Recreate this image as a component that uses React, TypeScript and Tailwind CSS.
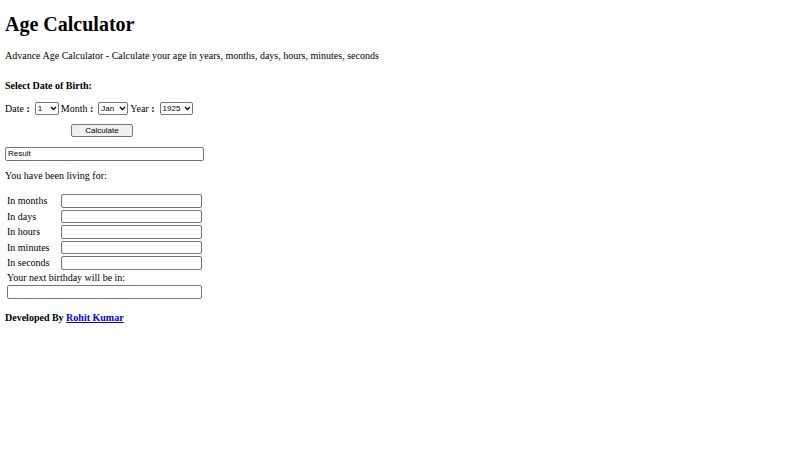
export default function App() {
  const rows = ["In months", "In days", "In hours", "In minutes", "In seconds"];
  return (
    <div className="min-h-[450px] bg-white p-[5px] font-['Liberation_Serif',serif] text-[10px] text-black">
      <h1 className="mt-[7px] text-[20px] font-bold leading-[24px]">Age Calculator</h1>
      <p className="mt-[13px] leading-[13px]">
        Advance Age Calculator - Calculate your age in years, months, days, hours, minutes, seconds
      </p>
      <p className="mt-[17px] font-bold leading-[13px]">Select Date of Birth:</p>
      <div className="mt-[9px] flex h-[14px] items-center leading-[13px]">
        <span>
          Date <b>:</b>
        </span>
        <Sel value="1" w="w-[24px]" />
        <span className="ml-[2px]">
          Month <b>:</b>
        </span>
        <Sel value="Jan" w="w-[30px]" />
        <span className="ml-[2px]">
          Year <b>:</b>
        </span>
        <Sel value="1925" w="w-[33px]" />
      </div>
      <button className="ml-[66px] mt-[9px] block h-[13px] w-[62px] rounded-[2px] border border-[#767676] bg-[#efefef] font-['Liberation_Sans',sans-serif] text-[8px] leading-[11px]">
        Calculate
      </button>
      <div className="mt-[10px] flex h-[14px] w-[199px] items-center rounded-[2px] border border-[#767676] px-[2px] font-['Liberation_Sans',sans-serif] text-[8px]">
        Result
      </div>
      <p className="mt-[8px] leading-[13px]">You have been living for:</p>
      <div className="mt-[12px] flex w-[200px] flex-col gap-[2px] pl-[2px]">
        {rows.map((r) => (
          <div key={r} className="flex h-[13.5px] items-center">
            <span className="w-[54px]">{r}</span>
            <div className="h-[13.5px] w-[141px] rounded-[2px] border border-[#767676]" />
          </div>
        ))}
        <span className="h-[12px] leading-[12px]">Your next birthday will be in:</span>
        <div className="mt-[-1px] h-[14px] w-[195px] rounded-[2px] border border-[#767676]" />
      </div>
      <p className="mt-[12px] font-bold leading-[13px]">
        Developed By{" "}
        <a href="#" className="text-[#0000ee] underline">
          Rohit Kumar
        </a>
      </p>
    </div>
  );
}

function Sel({ value, w }: { value: string; w: string }) {
  return (
    <span
      className={`ml-[5px] flex h-[13px] ${w} items-center justify-between rounded-[2px] border border-[#767676] bg-white pl-[2px] pr-[1px] font-['Liberation_Sans',sans-serif] text-[8px] leading-[11px]`}
    >
      <span>{value}</span>
      <svg width="7" height="5" viewBox="0 0 7 5" className="shrink-0">
        <path d="M1 1l2.5 2.5L6 1" fill="none" stroke="black" strokeWidth="1.3" />
      </svg>
    </span>
  );
}
